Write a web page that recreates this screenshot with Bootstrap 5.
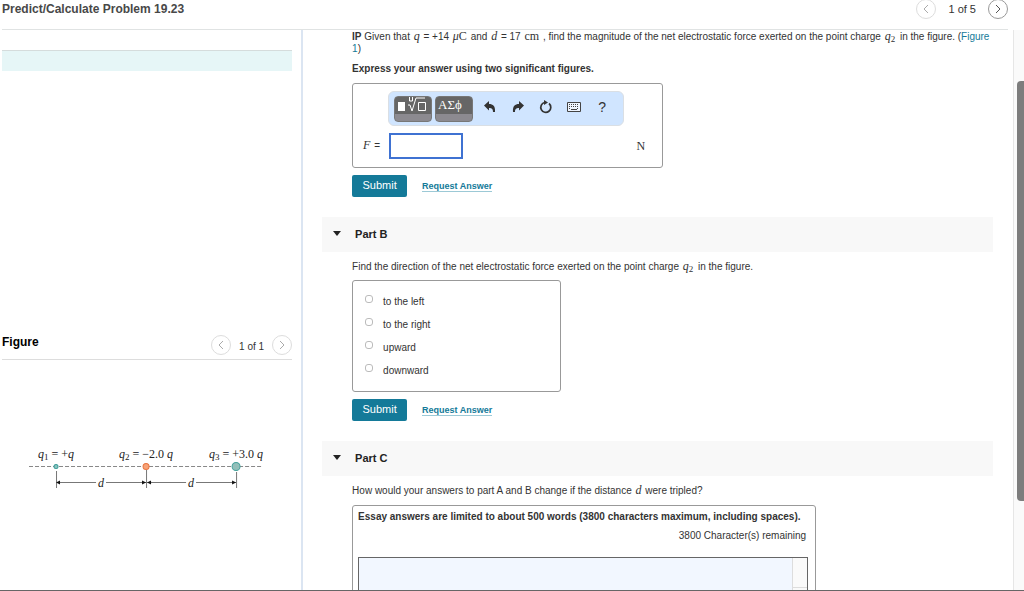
<!DOCTYPE html>
<html lang="en">
<head>
<meta charset="utf-8">
<meta name="viewport" content="width=device-width, initial-scale=1">
<title>Predict/Calculate Problem 19.23</title>
<link href="https://cdn.jsdelivr.net/npm/bootstrap@5.3.0/dist/css/bootstrap.min.css" rel="stylesheet">
<style>
  body { font-family: "Liberation Sans", Arial, sans-serif; font-size: 10px; line-height: 12px; color: #333; }
  .teal { color: #147a99; }
  .topbar { height: 30px; margin: 0 16px 0 2px; border-bottom: 1px solid #e0e3e3; padding-bottom: 11px; }
  .topbar h1 { font-size: 12px; line-height: 18px; color: #484848; }
  .topbar .count { font-size: 11px; line-height: 20px; }
  .round-btn { width: 20px; height: 20px; border: 1px solid #999; border-radius: 50%; background: #fff; color: #555; padding: 0; display: flex; align-items: center; justify-content: center; }
  .round-btn.faint { border-color: #ddd; color: #aaa; }
  .workspace { border-bottom: 1px solid #666; min-height: 0; }
  .side { width: 29.6%; flex: none; border-right: 2px solid #dbe5f2; padding: 20px 9px 0 2px; }
  .hint-strip { height: 21px; background: #e6f6f7; border-top: 1px solid #d5dcdc; }
  .figure-head { margin-top: 264px; height: 25px; border-bottom: 1px solid #ddd; padding-bottom: 4px; }
  .figure-head h2 { font-size: 12px; line-height: 14px; color: #000; }
  .figure-head .count { padding-top: 4px; }
  .diagram { display: block; width: 100%; margin-top: 80px; }
  .diagram text { font-family: "Liberation Serif", serif; font-size: 12px; fill: #222; }
  .question { padding: 1px 20px 0 19px; overflow: hidden; min-width: 0; }
  .indent { padding-left: 30px; }
  .indent p { margin: 0; }
  .math { font-family: "Liberation Serif", serif; font-size: 12px; line-height: 10px; margin: 0 1px; }
  .math sub { font-size: 9px; bottom: -2px; margin-right: 1px; }
  .panel { border: 1px solid #999; border-radius: 3px; width: fit-content; }
  .answer { width: 311px; height: 85px; margin-top: 8px; padding: 7px 9px 7px; }
  .tools { margin-left: 26px; width: 236px; height: 35px; padding: 4px 5px; background: #d0e5ff; border: 1px solid #dadfe4; border-radius: 6px; }
  .tpl { width: 38px; height: 26px; border: 1px solid #777; border-radius: 4px; background: linear-gradient(#666 0 17px, #8c8a90 17px); color: #fff; font: 13px/15px "Liberation Serif", serif; padding: 0; display: flex; align-items: flex-start; justify-content: center; margin-right: 3px; }
  .tpl.greek { justify-content: flex-start; padding-left: 2px; }
  .tool { width: 28px; height: 22px; border: 0; background: none; padding: 0; display: flex; align-items: center; justify-content: center; color: #333; font-size: 14px; }
  .entry { margin-top: 7px; }
  .entry label { width: 27px; }
  .entry input { width: 74px; height: 26px; border: 2px solid #3f72d2; padding: 2px 4px; font-size: 12px; }
  .entry .unit { margin-left: auto; margin-right: 8px; }
  .actions { margin-top: 7px; gap: 15px; }
  .submit { width: 55px; height: 22px; background: #147a99; color: #fff; border: 0; border-radius: 2px; font-size: 11px; line-height: 20px; padding: 0 0 2px; }
  .request { font-size: 9px; line-height: 10px; font-weight: 700; text-decoration: none; border-bottom: 1px solid #9cc9d6; }
  .part-head { margin: 20px 0 9px; height: 35px; background: #f8f8f8; padding: 0 0 2px 11px; gap: 14px; }
  .part-head h2 { font-size: 11px; line-height: 14px; color: #222; }
  .part-head button { border: 0; background: none; padding: 0; display: flex; }
  .choices { width: 209px; height: 112px; margin-top: 7px; padding: 9px 12px; }
  .choices label { height: 23px; display: flex; align-items: center; gap: 10px; }
  .choices input { appearance: none; width: 8px; height: 8px; border: 1px solid #bbb; border-radius: 3px; margin: 0 0 5px; background: #fff; }
  .choices input:checked { background: #147a99; }
  .essay { width: 464px; margin-top: 8px; padding: 5px 7px 8px 5px; }
  .essay .remaining { padding: 7px 2px 0 0; }
  .essay-box { border: 1px solid #666; margin-top: 15px; height: 120px; }
  .essay-box textarea { border: 0; background: #f2f7ff; resize: none; overflow: hidden; }
  .essay-box .track { width: 15px; background: #fafafa; border-left: 1px solid #ddd; }
  .essay-box .track div { height: 30px; border-bottom: 1px solid #ddd; }
  .scroller { width: 11px; flex: none; background: #fafafa; border-left: 1px solid #e6e6e6; padding-left: 3px; }
  .scroller .gap-top { height: 9.1%; }
  .scroller .thumb { height: 75%; background: #7d7d7d; border-radius: 4px 0 0 4px; }
</style>
</head>
<body class="vh-100 overflow-hidden d-flex flex-column bg-white">
<header class="topbar d-flex align-items-center flex-shrink-0">
  <h1 class="fw-bold m-0 me-auto">Predict/Calculate Problem 19.23</h1>
  <button class="round-btn faint" aria-label="Previous item"><svg width="8" height="10" fill="none" stroke="currentColor"><path d="M6 1 2 5l4 4"/></svg></button>
  <span class="count mx-2 px-1">1 of 5</span>
  <button class="round-btn" aria-label="Next item"><svg width="8" height="10" fill="none" stroke="currentColor"><path d="m2 1 4 4-4 4"/></svg></button>
</header>
<div class="workspace d-flex flex-grow-1">
  <aside class="side">
    <div class="hint-strip"></div>
    <div class="figure-head d-flex align-items-center">
      <h2 class="fw-bold m-0 me-auto align-self-start">Figure</h2>
      <button class="round-btn faint" aria-label="Previous figure"><svg width="8" height="10" fill="none" stroke="currentColor"><path d="M6 1 2 5l4 4"/></svg></button>
      <span class="count mx-2">1 of 1</span>
      <button class="round-btn faint" aria-label="Next figure"><svg width="8" height="10" fill="none" stroke="currentColor"><path d="m2 1 4 4-4 4"/></svg></button>
    </div>
    <svg class="diagram" viewBox="2 440 290 55" role="img" aria-label="Three charges on a line, separated by d">
      <path d="M29 466.500H263" stroke="#888" stroke-dasharray="4 2"/>
      <path d="M56.500 471v17M146.500 470v18M236.500 472v16" stroke="#777"/>
      <path d="M57 482.500H96M106 482.500H186M196 482.500H236" stroke="#777"/>
      <path d="m56 482.500 4-2v4zM146 482.500l-4-2v4zM147 482.500l4-2v4zM236 482.500l-4-2v4z" fill="#111"/>
      <circle cx="56" cy="466.500" r="2" fill="#8cc5c0" stroke="#3a9c98"/>
      <circle cx="146" cy="466.500" r="3" fill="#f7a277" stroke="#e8743f"/>
      <circle cx="236" cy="466.500" r="4" fill="#93bfb9" stroke="#45a19b"/>
      <text x="38" y="458"><tspan font-style="italic">q</tspan><tspan font-size="9" dy="2">1</tspan><tspan dy="-2"> = +</tspan><tspan font-style="italic">q</tspan></text>
      <text x="119" y="458"><tspan font-style="italic">q</tspan><tspan font-size="9" dy="2">2</tspan><tspan dy="-2"> = −2.0 </tspan><tspan font-style="italic">q</tspan></text>
      <text x="209" y="458"><tspan font-style="italic">q</tspan><tspan font-size="9" dy="2">3</tspan><tspan dy="-2"> = +3.0 </tspan><tspan font-style="italic">q</tspan></text>
      <text x="98" y="487" font-style="italic">d</text>
      <text x="188" y="487" font-style="italic">d</text>
    </svg>
  </aside>
  <main class="question flex-grow-1">
    <section class="indent">
      <p><b>IP</b> Given that <i class="math">q</i> = +14 <span class="math"><i>μ</i>C</span> and <i class="math">d</i> = 17 <span class="math">cm</span> , find the magnitude of the net electrostatic force exerted on the point charge <span class="math"><i>q</i><sub>2</sub></span> in the figure. (<a href="#" class="teal text-decoration-none">Figure 1</a>)</p>
      <p class="fw-bold pt-2">Express your answer using two significant figures.</p>
      <div class="panel answer">
        <div class="tools d-flex">
          <button class="tpl" aria-label="Templates"><svg width="32" height="17" fill="none" stroke="#fff"><path d="M1 5h7v9H1z" fill="#fff" stroke="none"/><path d="M11 8h2l2 6 4-13h9"/><path d="M12.500 0v4h3V0M21.500 5.500h7v8h-7z"/></svg></button>
          <button class="tpl greek">ΑΣϕ</button>
          <button class="tool" aria-label="Undo"><svg width="12" height="12" fill="currentColor"><path d="M0 4.500 5 0v3c4 0 6.500 2 6 8h-2c0-3-1-4-4-4v2.500z"/></svg></button>
          <button class="tool" aria-label="Redo"><svg width="12" height="12" fill="currentColor"><path d="M12 4.500 7 0v3C3 3 .5 5 1 11h2c0-3 1-4 4-4v2.500z"/></svg></button>
          <button class="tool" aria-label="Reset"><svg width="14" height="14" fill="none" stroke="currentColor" stroke-width="1.700"><path d="M10 3.500A5 5 0 1 1 5.500 2.500"/><path d="M5 0v5l4-2.500z" fill="currentColor" stroke="none"/></svg></button>
          <button class="tool" aria-label="Keyboard"><svg width="14" height="10" fill="none" stroke="#444"><path d="M.5.500h13v9H.5z" fill="#eef5ff"/><path d="M2 2.500h10M2 4.500h10M2 6.500h2m6 0h2" stroke-dasharray="1 1"/><path d="M4 7.500h6"/></svg></button>
          <button class="tool" aria-label="Help">?</button>
        </div>
        <div class="entry d-flex align-items-center">
          <label for="force"><i class="math">F</i> =</label>
          <input id="force" type="text">
          <span class="unit math">N</span>
        </div>
      </div>
      <div class="actions d-flex align-items-center"><button class="submit">Submit</button><a href="#" class="request teal">Request Answer</a></div>
    </section>
    <div class="part-head d-flex align-items-center"><button aria-label="Collapse Part B"><svg width="8" height="5" fill="#222"><path d="M0 0h8L4 5z"/></svg></button><h2 class="fw-bold m-0">Part B</h2></div>
    <section class="indent">
      <p>Find the direction of the net electrostatic force exerted on the point charge <span class="math"><i>q</i><sub>2</sub></span> in the figure.</p>
      <div class="panel choices">
        <label><input type="radio" name="dir">to the left</label>
        <label><input type="radio" name="dir">to the right</label>
        <label><input type="radio" name="dir">upward</label>
        <label><input type="radio" name="dir">downward</label>
      </div>
      <div class="actions d-flex align-items-center"><button class="submit">Submit</button><a href="#" class="request teal">Request Answer</a></div>
    </section>
    <div class="part-head d-flex align-items-center"><button aria-label="Collapse Part C"><svg width="8" height="5" fill="#222"><path d="M0 0h8L4 5z"/></svg></button><h2 class="fw-bold m-0">Part C</h2></div>
    <section class="indent">
      <p>How would your answers to part A and B change if the distance <i class="math">d</i> were tripled?</p>
      <div class="panel essay">
        <label for="essay" class="fw-bold d-block">Essay answers are limited to about 500 words (3800 characters maximum, including spaces).</label>
        <p class="remaining text-end">3800 Character(s) remaining</p>
        <div class="essay-box d-flex"><textarea id="essay" class="flex-grow-1"></textarea><div class="track"><div></div></div></div>
      </div>
    </section>
  </main>
  <div class="scroller" aria-hidden="true"><div class="gap-top"></div><div class="thumb"></div></div>
</div>
<script src="https://cdn.jsdelivr.net/npm/bootstrap@5.3.0/dist/js/bootstrap.bundle.min.js"></script>
</body>
</html>
